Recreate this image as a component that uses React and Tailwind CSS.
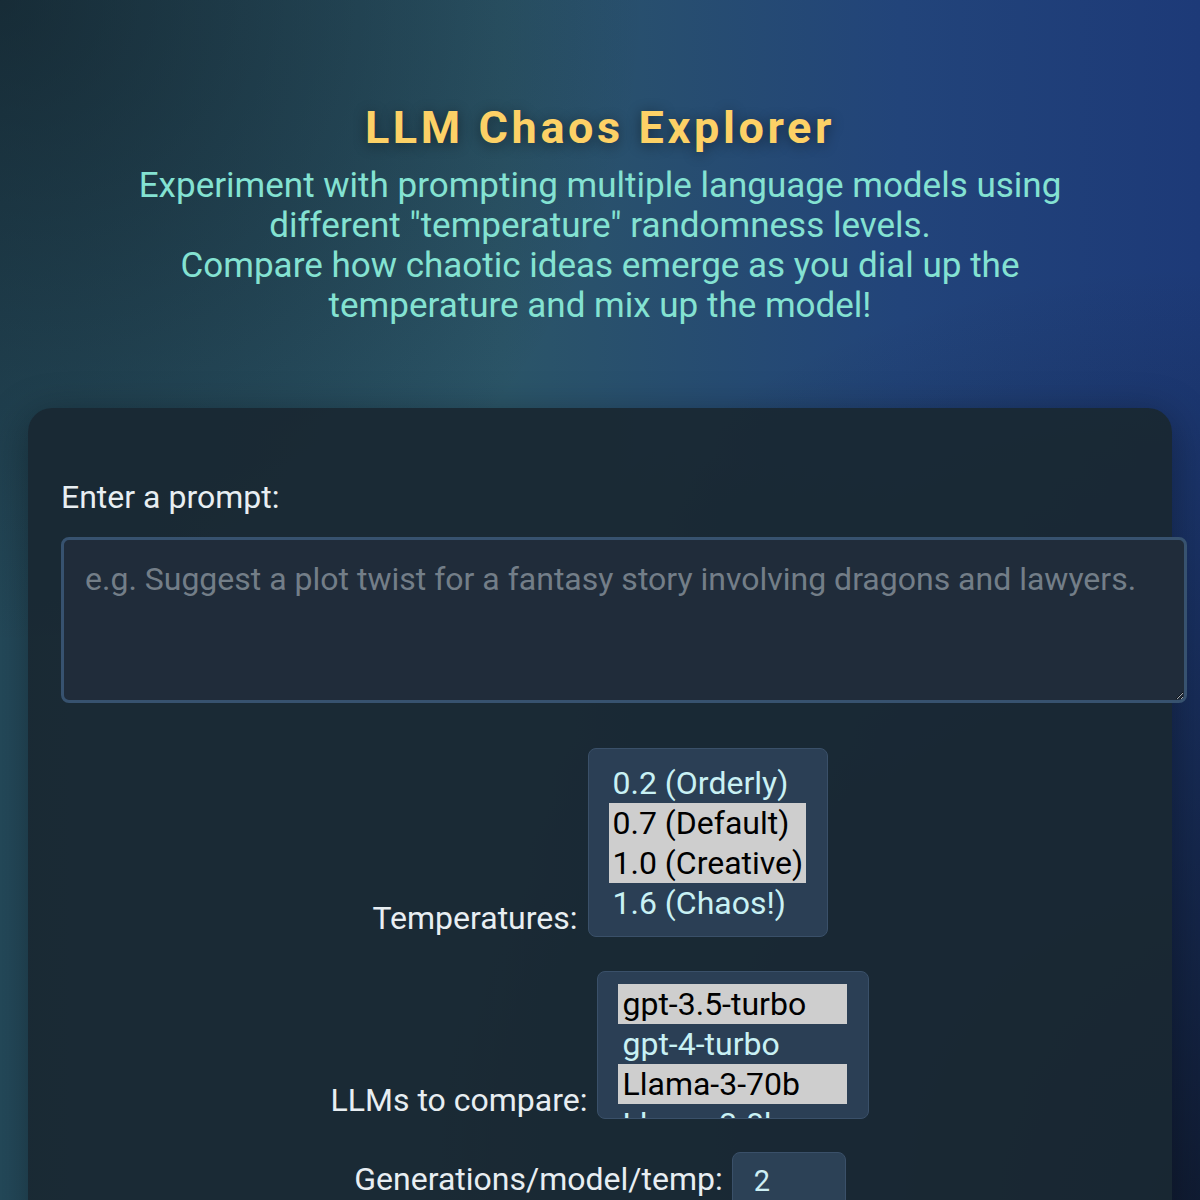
export default function App() {
  const temps = [
    { label: "0.2 (Orderly)", on: false },
    { label: "0.7 (Default)", on: true },
    { label: "1.0 (Creative)", on: true },
    { label: "1.6 (Chaos!)", on: false },
  ];
  const models = [
    { label: "gpt-3.5-turbo", on: true },
    { label: "gpt-4-turbo", on: false },
    { label: "Llama-3-70b", on: true },
    { label: "Llama-3-8b", on: false },
    { label: "mixtral-8x7b-instr", on: false },
  ];

  return (
    <div className="min-h-screen w-full bg-fixed bg-[radial-gradient(circle_at_0%_0%,rgba(12,20,26,0.55)_0%,transparent_38%),radial-gradient(circle_at_100%_100%,rgba(12,18,28,0.75)_0%,transparent_55%),linear-gradient(90deg,#24495a_0%,#2b5568_42%,#22447a_75%,#1d3a78_100%)] font-['Roboto',sans-serif] pt-[102px] pb-10">
      <header className="text-center">
        <h1 className="text-[45px] leading-[52px] font-bold tracking-[0.08em] text-[#fdd166] [text-shadow:0_2px_14px_rgba(0,0,0,0.45)]">
          LLM Chaos Explorer
        </h1>
        <p className="mt-[12px] text-[35px] leading-[40px] text-[#84e2d2]">
          Experiment with prompting multiple language models using
          <br />
          different "temperature" randomness levels.
          <br />
          Compare how chaotic ideas emerge as you dial up the
          <br />
          temperature and mix up the model!
        </p>
      </header>

      <main className="mx-[28px] mt-[82px] rounded-3xl bg-[#192833]/95 shadow-[0_8px_40px_rgba(0,0,0,0.35)] px-[33px] pt-[72px] pb-[120px]">
        <label className="block text-[32px] leading-[34px] text-[#e8eef2]">Enter a prompt:</label>
        <textarea
          className="block mt-[23px] box-content w-full h-[116px] px-[21px] pt-[22px] pb-[22px] border-[3px] border-[#37526f] rounded-lg bg-[#202c3a] text-[32px] leading-[34px] text-[#e8eef2] placeholder:text-[#737e88] outline-none"
          placeholder="e.g. Suggest a plot twist for a fantasy story involving dragons and lawyers."
        />

        <div className="mt-[45px] flex justify-center items-end gap-[10px]">
          <span className="text-[32px] leading-[34px] text-[#e8eef2] mb-[2px]">Temperatures:</span>
          <ListBox items={temps} box="w-[240px] h-[189px] pt-[14px]" />
        </div>

        <div className="mt-[34px] flex justify-center items-end gap-[10px]">
          <span className="text-[32px] leading-[34px] text-[#e8eef2] mb-[2px]">LLMs to compare:</span>
          <ListBox items={models} box="w-[272px] h-[148px] pt-[12px]" />
        </div>

        <div className="mt-[33px] flex justify-center items-start gap-[9px]">
          <span className="text-[32px] leading-[34px] text-[#e8eef2] mt-[10px]">Generations/model/temp:</span>
          <div className="w-[114px] h-[56px] rounded-lg border border-[#3a5069] bg-[#2c4156] pl-[21px] pt-[11px] text-[29px] leading-[34px] text-[#cdeff4]">
            2
          </div>
        </div>
      </main>
    </div>
  );
}

function ListBox({ items, box }) {
  return (
    <div className={`${box} overflow-hidden rounded-lg border border-[#3a5069] bg-[#2b3f55] pl-[20px] pr-[21px]`}>
      {items.map((it) => (
        <div
          key={it.label}
          className={`h-[40px] px-[4px] text-[32px] leading-[40px] whitespace-nowrap ${
            it.on ? "bg-[#cecece] text-black" : "text-[#c9f1f4]"
          }`}
        >
          {it.label}
        </div>
      ))}
    </div>
  );
}
